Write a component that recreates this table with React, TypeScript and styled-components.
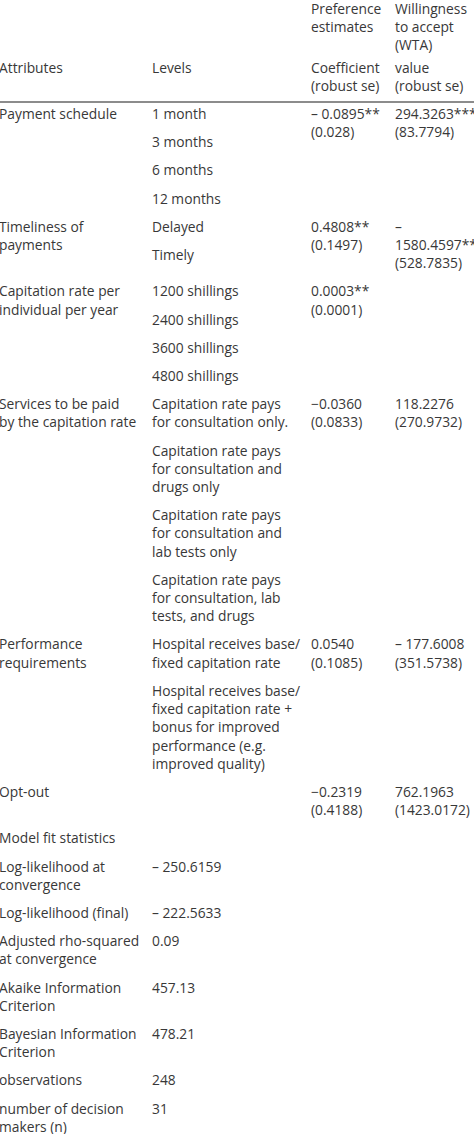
import React from 'react';
import styled, { createGlobalStyle } from 'styled-components';

const GlobalStyle = createGlobalStyle`
  html, body {
    margin: 0;
    padding: 0;
    background: #ffffff;
  }
  body {
    font-family: "Open Sans", "Liberation Sans", sans-serif;
    color: #383838;
  }
`;

const Page = styled.div`
  width: 474px;
  height: 1134px;
  overflow: hidden;
`;

const Table = styled.table`
  width: 475px;
  margin: -1px 0 0 -1px;
  border-collapse: collapse;
  table-layout: fixed;
  font-size: 13.8px;
  line-height: 18.2px;
  font-variant-ligatures: none;
`;

const HeadCell = styled.th<{ $first?: boolean }>`
  text-align: left;
  font-weight: 400;
  vertical-align: top;
  white-space: nowrap;
  padding: ${({ $first }) => ($first ? '1px 0 2px' : '2px 0 6px')};
`;

const HeadRow = styled.tr<{ $rule?: boolean }>`
  border-bottom: ${({ $rule }) => ($rule ? '2px solid #8c8c8c' : 'none')};
`;

const Body = styled.tbody`
  tr:first-child td {
    padding-top: 2px;
  }
`;

const Cell = styled.td`
  vertical-align: top;
  white-space: nowrap;
  padding: 5px 0;
`;

const LevelList = styled.div`
  display: flex;
  flex-direction: column;
  gap: 10px;
`;

type Lines = string[];

interface Group {
  attr: Lines;
  levels: Lines[];
  coef?: Lines;
  wta?: Lines;
}

const groups: Group[] = [
  {
    attr: ['Payment schedule'],
    levels: [['1 month'], ['3 months'], ['6 months'], ['12 months']],
    coef: ['– 0.0895**', '(0.028)'],
    wta: ['294.3263***', '(83.7794)'],
  },
  {
    attr: ['Timeliness of', 'payments'],
    levels: [['Delayed'], ['Timely']],
    coef: ['0.4808**', '(0.1497)'],
    wta: ['–', '1580.4597**', '(528.7835)'],
  },
  {
    attr: ['Capitation rate per', 'individual per year'],
    levels: [['1200 shillings'], ['2400 shillings'], ['3600 shillings'], ['4800 shillings']],
    coef: ['0.0003**', '(0.0001)'],
  },
  {
    attr: ['Services to be paid', 'by the capitation rate'],
    levels: [
      ['Capitation rate pays', 'for consultation only.'],
      ['Capitation rate pays', 'for consultation and', 'drugs only'],
      ['Capitation rate pays', 'for consultation and', 'lab tests only'],
      ['Capitation rate pays', 'for consultation, lab', 'tests, and drugs'],
    ],
    coef: ['−0.0360', '(0.0833)'],
    wta: ['118.2276', '(270.9732)'],
  },
  {
    attr: ['Performance', 'requirements'],
    levels: [
      ['Hospital receives base/', 'fixed capitation rate'],
      [
        'Hospital receives base/',
        'fixed capitation rate +',
        'bonus for improved',
        'performance (e.g.',
        'improved quality)',
      ],
    ],
    coef: ['0.0540', '(0.1085)'],
    wta: ['– 177.6008', '(351.5738)'],
  },
  {
    attr: ['Opt-out'],
    levels: [],
    coef: ['−0.2319', '(0.4188)'],
    wta: ['762.1963', '(1423.0172)'],
  },
  { attr: ['Model fit statistics'], levels: [] },
  { attr: ['Log-likelihood at', 'convergence'], levels: [['– 250.6159']] },
  { attr: ['Log-likelihood (final)'], levels: [['– 222.5633']] },
  { attr: ['Adjusted rho-squared', 'at convergence'], levels: [['0.09']] },
  { attr: ['Akaike Information', 'Criterion'], levels: [['457.13']] },
  { attr: ['Bayesian Information', 'Criterion'], levels: [['478.21']] },
  { attr: ['observations'], levels: [['248']] },
  { attr: ['number of decision', 'makers (n)'], levels: [['31']] },
];

const Text: React.FC<{ lines?: Lines }> = ({ lines = [] }) => (
  <>
    {lines.map((line, i) => (
      <React.Fragment key={i}>
        {i > 0 && <br />}
        {line}
      </React.Fragment>
    ))}
  </>
);

const GroupRow: React.FC<{ group: Group }> = ({ group }) => (
  <tr>
    <Cell>
      <Text lines={group.attr} />
    </Cell>
    <Cell>
      <LevelList>
        {group.levels.map((level, i) => (
          <div key={i}>
            <Text lines={level} />
          </div>
        ))}
      </LevelList>
    </Cell>
    <Cell>
      <Text lines={group.coef} />
    </Cell>
    <Cell>
      <Text lines={group.wta} />
    </Cell>
  </tr>
);

export default function App() {
  return (
    <Page>
      <GlobalStyle />
      <Table>
        <colgroup>
          <col style={{ width: 153 }} />
          <col style={{ width: 159 }} />
          <col style={{ width: 84 }} />
          <col style={{ width: 79 }} />
        </colgroup>
        <thead>
          <HeadRow>
            <HeadCell $first />
            <HeadCell $first />
            <HeadCell $first>
              <Text lines={['Preference', 'estimates']} />
            </HeadCell>
            <HeadCell $first>
              <Text lines={['Willingness', 'to accept', '(WTA)']} />
            </HeadCell>
          </HeadRow>
          <HeadRow $rule>
            <HeadCell>Attributes</HeadCell>
            <HeadCell>Levels</HeadCell>
            <HeadCell>
              <Text lines={['Coefficient', '(robust se)']} />
            </HeadCell>
            <HeadCell>
              <Text lines={['value', '(robust se)']} />
            </HeadCell>
          </HeadRow>
        </thead>
        <Body>
          {groups.map((g, i) => (
            <GroupRow key={i} group={g} />
          ))}
        </Body>
      </Table>
    </Page>
  );
}
